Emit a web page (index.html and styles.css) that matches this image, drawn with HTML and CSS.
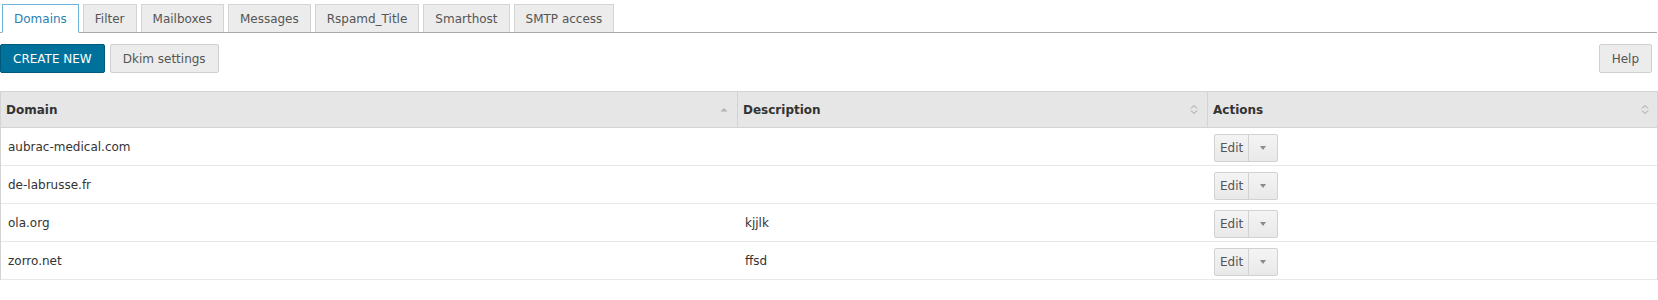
FILE: index.html
```html
<!DOCTYPE html>
<html>
<head>
<meta charset="utf-8">
<link rel="stylesheet" href="styles.css">
</head>
<body>
<div class="page">
  <ul class="tabs">
    <li class="tab active">Domains</li>
    <li class="tab">Filter</li>
    <li class="tab">Mailboxes</li>
    <li class="tab">Messages</li>
    <li class="tab">Rspamd_Title</li>
    <li class="tab">Smarthost</li>
    <li class="tab">SMTP access</li>
  </ul>
  <div class="toolbar">
    <div class="left">
      <button class="btn primary">CREATE NEW</button>
      <button class="btn">Dkim settings</button>
    </div>
    <button class="btn">Help</button>
  </div>
  <table class="grid">
    <colgroup>
      <col class="c1"><col class="c2"><col class="c3">
    </colgroup>
    <thead>
      <tr>
        <th class="h1"><div class="th"><span>Domain</span><svg class="sort" width="8" height="10" viewBox="0 0 8 10"><path d="M0.5 6.5 L4 3 L7.5 6.5 Z" fill="#b3b3b3"/></svg></div></th>
        <th class="h2"><div class="th"><span>Description</span><svg class="sort" width="8" height="11" viewBox="0 0 8 11"><path d="M1 4.5 L4 1.5 L7 4.5 M1 6.5 L4 9.5 L7 6.5" fill="none" stroke="#a0a0a0" stroke-width="1"/></svg></div></th>
        <th class="h3"><div class="th"><span>Actions</span><svg class="sort" width="8" height="11" viewBox="0 0 8 11"><path d="M1 4.5 L4 1.5 L7 4.5 M1 6.5 L4 9.5 L7 6.5" fill="none" stroke="#a0a0a0" stroke-width="1"/></svg></div></th>
      </tr>
    </thead>
    <tbody>
      <tr><td>aubrac-medical.com</td><td></td><td class="act"><div class="split"><span class="edit">Edit</span><span class="caret"></span></div></td></tr>
      <tr><td>de-labrusse.fr</td><td></td><td class="act"><div class="split"><span class="edit">Edit</span><span class="caret"></span></div></td></tr>
      <tr><td>ola.org</td><td>kjjlk</td><td class="act"><div class="split"><span class="edit">Edit</span><span class="caret"></span></div></td></tr>
      <tr><td>zorro.net</td><td>ffsd</td><td class="act"><div class="split"><span class="edit">Edit</span><span class="caret"></span></div></td></tr>
    </tbody>
  </table>
</div>
</body>
</html>
```
FILE: styles.css
```css
* { box-sizing: border-box; }
body {
  margin: 0;
  font-family: "DejaVu Sans", sans-serif;
  font-size: 12px;
  color: #333;
  background: #fff;
}
.page {
  width: 1658px;
  padding-top: 4px;
}
.tabs {
  list-style: none;
  margin: 0 1px 0 0;
  padding: 0 0 0 2px;
  display: flex;
  gap: 4px;
  border-bottom: 1px solid #a9a9a9;
  height: 29px;
}
.tab {
  height: 28px;
  padding: 0 11px;
  display: flex;
  align-items: center;
  background: #ececec;
  border: 1px solid #d4d4d4;
  border-bottom: none;
  color: #555;
}
.tab.active {
  background: #fff;
  color: #2a7fb0;
  border-color: #6db6dc;
  height: 29px;
  border-bottom: 1px solid #fff;
}
.toolbar {
  display: flex;
  justify-content: space-between;
  margin-top: 11px;
  padding-right: 6px;
}
.left { display: flex; gap: 5px; }
.btn {
  font-family: "DejaVu Sans", sans-serif;
  font-size: 12px;
  height: 29px;
  padding: 0 12px;
  background: #ececec;
  border: 1px solid #d0d0d0;
  border-radius: 2px;
  color: #555;
  margin: 0;
}
.btn.primary {
  background: #00719b;
  border-color: #00587a;
  color: #fff;
  padding: 0 12px;
}
.grid {
  margin-top: 18px;
  width: 1658px;
  border-collapse: separate;
  border-spacing: 0;
  table-layout: fixed;
  border-left: 1px solid #d3d3d3;
  border-right: 1px solid #d3d3d3;
}
.c1 { width: 737px; }
.c2 { width: 470px; }
.c3 { width: 449px; }
th {
  background: #e6e6e6;
  border-top: 1px solid #d3d3d3;
  border-bottom: 1px solid #d3d3d3;
  border-right: 1px solid #d3d3d3;
  height: 37px;
  padding: 0 9px 0 5px;
  text-align: left;
  font-weight: bold;
  color: #333;
}
th.h2 { padding-right: 9px; }
th.h3 { border-right: none; padding-right: 8px; }
.th { display: flex; justify-content: space-between; align-items: center; }
.sort { display: block; }
td {
  height: 38px;
  padding: 0 6px 0 7px;
  border-bottom: 1px solid #e8e8e8;
  color: #333;
  vertical-align: middle;
}
td.act { padding-left: 6px; padding-top: 2px; }
.split {
  display: inline-flex;
  height: 28px;
  border: 1px solid #d2d2d2;
  border-radius: 2px;
  background: linear-gradient(#f4f4f4, #e9e9e9);
  color: #555;
}
.edit {
  display: flex; align-items: center;
  padding: 0 5px;
  border-right: 1px solid #d2d2d2;
}
.caret {
  width: 28px;
  display: flex; align-items: center; justify-content: center;
}
.caret::before {
  content: "";
  border-left: 3.5px solid transparent;
  border-right: 3.5px solid transparent;
  border-top: 4px solid #8a8a8a;
}
```
